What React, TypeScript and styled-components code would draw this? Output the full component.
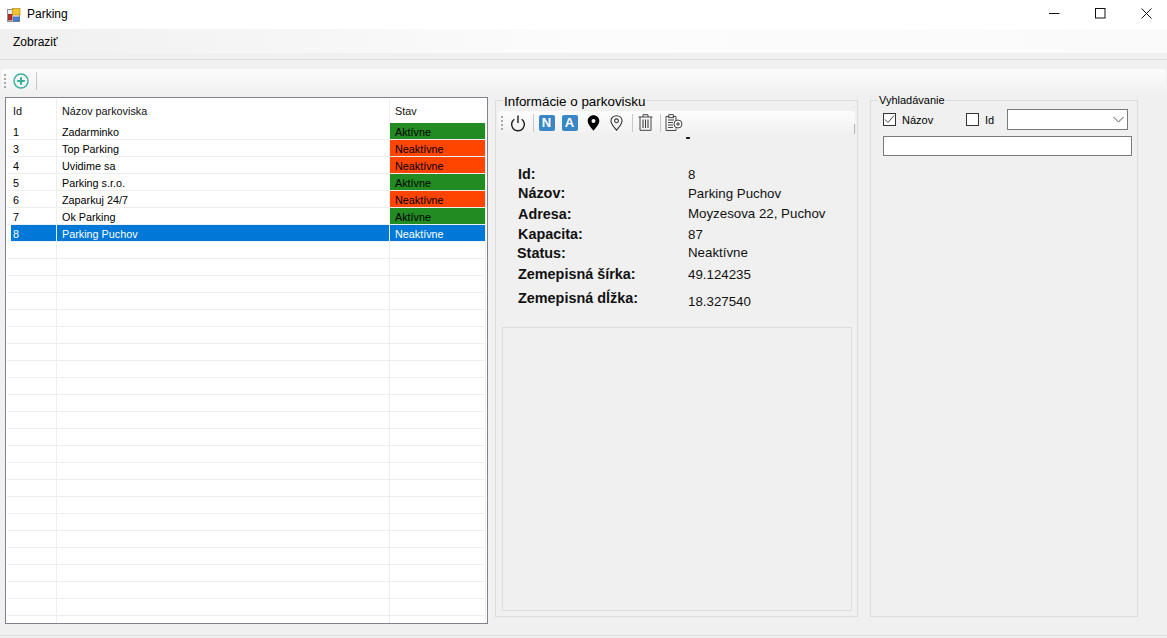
import React from "react";
import styled, { createGlobalStyle } from "styled-components";

const Global = createGlobalStyle`
  html, body { margin: 0; padding: 0; height: 100%; background: #f0f0f0; overflow: hidden; }
  body { font-family: "Liberation Sans", Arial, sans-serif; font-size: 11px; color: #000; }
  * { box-sizing: border-box; }
`;

const Window = styled.div`
  width: 1167px;
  height: 638px;
  display: flex;
  flex-direction: column;
  background: #f0f0f0;
`;
const TitleBar = styled.header`
  height: 29px;
  background: #fff;
  display: flex;
  align-items: center;
  padding: 0 0 0 7px;
`;
const TitleText = styled.span`
  font-size: 12px;
  margin-left: 6px;
  flex: 1;
  position: relative;
  top: -1px;
`;
const WinButton = styled.div`
  width: 46px;
  height: 29px;
  display: flex;
  align-items: center;
  justify-content: center;
  margin-top: -3px;
  position: relative;
  left: 2px;
`;
const MenuBar = styled.nav`
  height: 31px;
  border-bottom: 1px solid #dcdcdc;
  background: linear-gradient(to bottom, transparent 0 24px, #f0f0f0 24px), linear-gradient(to right, #f0f0f0, #fcfcfc 50%, #fafafa);
  padding: 6px 0 0 13px;
  font-size: 12px;
`;
const MainToolbar = styled.div`
  height: 24px;
  margin: 9px 1px 0 1px;
  border-radius: 3px;
  background: linear-gradient(to bottom, #fcfcfc, #f6f6f6 60%, #f0f0f0);
  display: flex;
  align-items: center;
  padding-left: 3px;
  gap: 4px;
`;
const Grip = styled.span`
  width: 2px;
  height: 14px;
  background: repeating-linear-gradient(to bottom, #a8a8a8 0 2px, transparent 2px 4px);
  flex: none;
`;
const Sep = styled.span`
  width: 1px;
  height: 18px;
  background: #c8c8c8;
  flex: none;
`;
const Content = styled.main`
  display: flex;
  padding: 4px 0 0 5px;
  align-items: flex-start;
`;
const GridBox = styled.section`
  width: 483px;
  height: 527px;
  border: 1px solid #82828c;
  background: #fff;
  overflow: hidden;
  margin-right: 7px;
  flex: none;
`;
const columns = "grid-template-columns: 50px 333px 96px;";
const HeaderRow = styled.div`
  display: grid;
  ${columns}
  height: 25px;
  padding-left: 1px;
  align-items: stretch;
`;
const HeaderCell = styled.div<{ $last?: boolean; $first?: boolean }>`
  margin-top: 1px;
  margin-bottom: 1px;
  border-right: ${(p) => (p.$last ? "none" : "1px solid #eeeeee")};
  padding: 1px 0 0 ${(p) => (p.$first ? "6px" : "5px")};
  display: flex;
  align-items: center;
  font-size: 10.8px;
  color: #111;
`;
const Row = styled.div`
  display: grid;
  ${columns}
  height: 17px;
  padding-left: 1px;
`;
const Cell = styled.div<{ $bg?: string; $first?: boolean; $selected?: boolean }>`
  height: 17px;
  border-bottom: 1px solid #eeeeee;
  border-right: 1px solid #eeeeee;
  padding: 1px 0 0 ${(p) => (p.$first ? "6px" : "5px")};
  line-height: 16px;
  font-size: 10.8px;
  white-space: nowrap;
  overflow: hidden;
  color: ${(p) => (p.$selected ? "#fff" : "#000")};
  background: ${(p) =>
    p.$first && p.$selected
      ? "linear-gradient(to right, #fff 4px, #0078d7 4px)"
      : p.$selected
      ? "#0078d7"
      : p.$bg ?? "#fff"};
`;
const Group = styled.fieldset<{ $w: number }>`
  width: ${(p) => p.$w}px;
  height: 523px;
  margin: -3px 12px 0 0;
  padding: 0;
  border: 1px solid #dcdcdc;
  flex: none;
  position: relative;
  min-width: 0;
`;
const InfoLegend = styled.legend`
  margin-left: 7px;
  padding: 0 1px;
  font-size: 13.4px;
  line-height: 13px;
  position: relative;
  top: 1px;
`;
const SearchLegend = styled.legend`
  margin-left: 7px;
  padding: 0 1px;
  font-size: 11px;
  line-height: 13px;
`;
const InfoToolbar = styled.div`
  height: 23px;
  margin: 4px 2px 0 2px;
  border-radius: 3px;
  background: linear-gradient(to bottom, #fcfcfc, #f6f6f6 60%, #f0f0f0);
  display: flex;
  align-items: center;
  padding-left: 3px;
  position: relative;
`;
const ToolIcon = styled.span`
  display: flex;
  width: 23px;
  justify-content: center;
  align-items: center;
  flex: none;
`;
const AddSlot = styled(ToolIcon)`
  width: 22px;
`;
const PowerSlot = styled(ToolIcon)`
  margin-left: 3px;
`;
const PinSlot = styled(ToolIcon)`
  margin-left: 1px;
`;
const SmallSep = styled(Sep)<{ $l: number; $r: number }>`
  margin: 0 ${(p) => p.$r}px 0 ${(p) => p.$l}px;
`;
const BlueTile = styled.span`
  width: 16px;
  height: 16px;
  border-radius: 2px;
  background: #3a87c8;
  color: #fff;
  font-weight: 700;
  font-size: 13px;
  line-height: 16px;
  text-align: center;
`;
const EdgeTick = styled.span`
  position: absolute;
  right: 0;
  top: 13px;
  width: 1px;
  height: 10px;
  background: #b0b0b0;
`;
const Tick = styled.span`
  position: absolute;
  left: 190px;
  top: 30px;
  width: 4px;
  height: 2px;
  background: #222;
`;
const Details = styled.dl`
  margin: 30px 0 0 0;
  display: grid;
  grid-template-columns: 170px 1fr;
  padding-left: 22px;
  height: 163px;
  align-content: start;
`;
const Term = styled.dt<{ $h: number; $x?: number; $up?: number }>`
  font-weight: 700;
  font-size: 14.4px;
  height: ${(p) => p.$h}px;
  line-height: 20px;
  margin-left: ${(p) => p.$x ?? 0}px;
  color: #111;
  white-space: nowrap;
  transform: translateY(${(p) => p.$up ?? 0}px);
`;
const Value = styled.dd<{ $h: number; $up?: number }>`
  margin: 0;
  font-size: 13.3px;
  height: ${(p) => p.$h}px;
  line-height: 20px;
  white-space: nowrap;
  color: #111;
  transform: translateY(${(p) => p.$up ?? 0}px);
`;
const InnerPanel = styled.div`
  margin: 0 5px 0 6px;
  height: 284px;
  border: 1px solid #dcdcdc;
`;
const SearchForm = styled.div`
  padding: 2px 5px 0 12px;
  display: flex;
  flex-direction: column;
  gap: 6px;
`;
const SearchRow = styled.div`
  display: flex;
  align-items: center;
  height: 21px;
`;
const CheckLabel = styled.label<{ $w: number }>`
  display: flex;
  align-items: center;
  width: ${(p) => p.$w}px;
  gap: 6px;
  font-size: 11px;
  flex: none;
`;
const CheckBox = styled.span`
  width: 13px;
  height: 13px;
  border: 1px solid #333;
  background: #fff;
  display: flex;
  align-items: center;
  justify-content: center;
  flex: none;
`;
const Select = styled.div`
  width: 121px;
  height: 21px;
  border: 1px solid #7a7a7a;
  background: #fff;
  display: flex;
  align-items: center;
  justify-content: flex-end;
  padding-right: 3px;
`;
const TextInput = styled.div`
  width: 249px;
  height: 20px;
  border: 1px solid #7a7a7a;
  background: #fff;
`;
const Footer = styled.footer`
  margin-top: 11px;
  border-top: 1px solid #dcdcdc;
  height: 3px;
`;

const rows = [
  ["1", "Zadarminko", "Aktívne"],
  ["3", "Top Parking", "Neaktívne"],
  ["4", "Uvidime sa", "Neaktívne"],
  ["5", "Parking s.r.o.", "Aktívne"],
  ["6", "Zaparkuj 24/7", "Neaktívne"],
  ["7", "Ok Parking", "Aktívne"],
  ["8", "Parking Puchov", "Neaktívne"],
];

const AppIcon = () => (
  <svg width="14" height="14" viewBox="0 0 14 14">
    <rect x="0.5" y="1.5" width="12" height="12" fill="#ececec" stroke="#8f8f8f" />
    <rect x="1.5" y="6.500" width="3.500" height="5.500" fill="#c8281c" stroke="#7a1410" strokeWidth="0.7" />
    <rect x="5.500" y="0.500" width="7.500" height="6.500" fill="#f4c430" stroke="#b58a10" strokeWidth="0.7" />
    <rect x="6.500" y="9" width="5.500" height="4" fill="#4a86e0" stroke="#2a5ca5" strokeWidth="0.7" />
  </svg>
);
const AddIcon = () => (
  <svg width="16" height="16" viewBox="0 0 16 16" fill="none" stroke="#35b09a">
    <circle cx="8" cy="8" r="7" strokeWidth="1.4" />
    <path d="M8 4.2v7.6M4.2 8h7.6" strokeWidth="2" />
  </svg>
);
const PowerIcon = () => (
  <svg width="16" height="18" viewBox="0 0 16 18" fill="none" stroke="#1c1c1c" strokeWidth="1.4">
    <path d="M4.300 5.200a6.400 6.400 0 1 0 7.400 0" />
    <path d="M8 1.500v7.500" />
  </svg>
);
const PinSolid = () => (
  <svg width="13" height="16" viewBox="0 0 13 16">
    <path fillRule="evenodd" fill="#000" d="M6.500 0.300C3.100 0.300 0.700 2.800 0.700 5.900c0 3.600 4 7.200 5.800 9.800 1.800-2.600 5.800-6.200 5.800-9.800C12.300 2.800 9.900 0.300 6.500 0.300zM6.500 3.900a2 2 0 1 1 0 4 2 2 0 0 1 0-4z" />
  </svg>
);
const PinOutline = () => (
  <svg width="13" height="16" viewBox="0 0 13 16" fill="none" stroke="#333" strokeWidth="1.100">
    <path d="M6.500 0.700C3.300 0.700 1 3 1 5.900c0 3.400 3.700 6.700 5.500 9.300 1.800-2.600 5.500-5.900 5.500-9.300C12 3 9.700 0.700 6.500 0.700z" />
    <circle cx="6.500" cy="5.800" r="1.900" />
  </svg>
);
const TrashIcon = () => (
  <svg width="15" height="17" viewBox="0 0 15 17" fill="none" stroke="#444" strokeWidth="1">
    <path d="M0.500 3h14M5 3V0.700h5V3M2 3v13.300h11V3" />
    <path d="M5 5.500v8.500M7.500 5.500v8.500M10 5.500v8.500" strokeWidth="1.100" />
  </svg>
);
const ReportIcon = () => (
  <svg width="18" height="17" viewBox="0 0 18 17" fill="none" stroke="#333" strokeWidth="0.9">
    <path d="M4 2.500H1v14h10v-2" />
    <path d="M8 2.500h3v4" />
    <rect x="3.800" y="0.700" width="4.500" height="3" />
    <path d="M3 6h6M3 8.500h5M3 11h5M3 13.500h5" />
    <circle cx="13" cy="10" r="4" />
    <path d="M13 8v4M11 10h4" />
  </svg>
);
const Check = () => (
  <svg width="11" height="11" viewBox="0 0 11 11" fill="none" stroke="#444" strokeWidth="1">
    <path d="M1 5.500l3 3 6-7" />
  </svg>
);

const App = () => (
  <Window>
    <Global />
    <TitleBar>
      <AppIcon />
      <TitleText>Parking</TitleText>
      <WinButton>
        <svg width="11" height="11" viewBox="0 0 11 11"><path d="M0 5.500h10.500" stroke="#111" /></svg>
      </WinButton>
      <WinButton>
        <svg width="11" height="11" viewBox="0 0 11 11"><rect x="0.500" y="0.500" width="9.500" height="9.500" fill="none" stroke="#111" /></svg>
      </WinButton>
      <WinButton>
        <svg width="11" height="11" viewBox="0 0 11 11"><path d="M0.500 0.500l10 10M10.500 0.500l-10 10" stroke="#111" /></svg>
      </WinButton>
    </TitleBar>
    <MenuBar>Zobraziť</MenuBar>
    <MainToolbar>
      <Grip />
      <AddSlot><AddIcon /></AddSlot>
      <Sep />
    </MainToolbar>
    <Content>
      <GridBox>
        <HeaderRow>
          <HeaderCell $first>Id</HeaderCell>
          <HeaderCell>Názov parkoviska</HeaderCell>
          <HeaderCell $last>Stav</HeaderCell>
        </HeaderRow>
        {Array.from({ length: 30 }).map((_, i) => {
          const r = rows[i];
          const sel = i === 6;
          const bg = r && !sel ? (r[2] === "Aktívne" ? "#228b22" : "#ff4500") : undefined;
          return (
            <Row key={i}>
              <Cell $first $selected={sel}>{r?.[0]}</Cell>
              <Cell $selected={sel}>{r?.[1]}</Cell>
              <Cell $selected={sel} $bg={bg}>{r?.[2]}</Cell>
            </Row>
          );
        })}
      </GridBox>
      <Group $w={363}>
        <InfoLegend>Informácie o parkovisku</InfoLegend>
        <InfoToolbar>
          <Grip />
          <PowerSlot><PowerIcon /></PowerSlot>
          <SmallSep $l={4} $r={1} />
          <ToolIcon><BlueTile>N</BlueTile></ToolIcon>
          <ToolIcon><BlueTile>A</BlueTile></ToolIcon>
          <PinSlot><PinSolid /></PinSlot>
          <ToolIcon><PinOutline /></ToolIcon>
          <SmallSep $l={4} $r={1} />
          <ToolIcon><TrashIcon /></ToolIcon>
          <SmallSep $l={3} $r={1} />
          <ToolIcon><ReportIcon /></ToolIcon>
          <EdgeTick />
        </InfoToolbar>
        <Tick />
        <Details>
          <Term $h={20}>Id:</Term><Value $h={20} $up={1}>8</Value>
          <Term $h={20} $up={-1}>Názov:</Term><Value $h={20}>Parking Puchov</Value>
          <Term $h={20}>Adresa:</Term><Value $h={20}>Moyzesova 22, Puchov</Value>
          <Term $h={20}>Kapacita:</Term><Value $h={20} $up={1}>87</Value>
          <Term $h={20} $x={-1} $up={-1}>Status:</Term><Value $h={20} $up={-1}>Neaktívne</Value>
          <Term $h={24}>Zemepisná šírka:</Term><Value $h={24} $up={1}>49.124235</Value>
          <Term $h={24}>Zemepisná dĺžka:</Term><Value $h={24} $up={4}>18.327540</Value>
        </Details>
        <InnerPanel />
      </Group>
      <Group $w={268}>
        <SearchLegend>Vyhladávanie</SearchLegend>
        <SearchForm>
          <SearchRow>
            <CheckLabel $w={83}><CheckBox><Check /></CheckBox>Názov</CheckLabel>
            <CheckLabel $w={41}><CheckBox />Id</CheckLabel>
            <Select>
              <svg width="11" height="7" viewBox="0 0 11 7" fill="none" stroke="#555"><path d="M0.500 1l5 5 5-5" /></svg>
            </Select>
          </SearchRow>
          <TextInput />
        </SearchForm>
      </Group>
    </Content>
    <Footer />
  </Window>
);

export default App;
